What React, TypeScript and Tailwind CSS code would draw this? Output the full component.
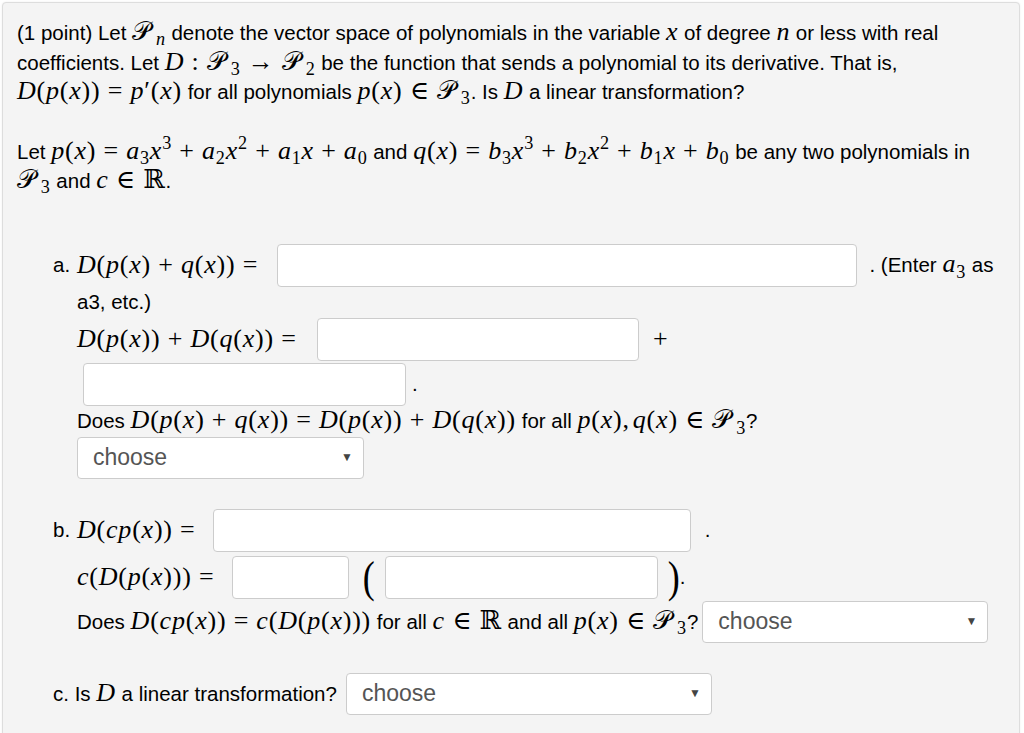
import React from 'react';

const mathFont = { fontFamily: '"Liberation Serif", "DejaVu Serif", serif' };

// italic math variable
const V = ({ children }: { children: React.ReactNode }) => (
  <span className="italic">{children}</span>
);

const Sub = ({ children }: { children: React.ReactNode }) => (
  <sub className="not-italic text-[0.7em] relative top-[0.3em] align-baseline">{children}</sub>
);

const Sup = ({ children }: { children: React.ReactNode }) => (
  <sup className="not-italic text-[0.7em] relative -top-[0.5em] align-baseline">{children}</sup>
);

const M = ({ children }: { children: React.ReactNode }) => (
  <span className="text-[26px] leading-none tracking-[0.03em] whitespace-nowrap" style={mathFont}>
    {children}
  </span>
);

const P = ({ n }: { n: React.ReactNode }) => (
  <>
    <span>𝒫</span>
    <Sub>
      <span className="ml-[4px]">{n}</span>
    </Sub>
  </>
);

const Op = ({ children }: { children: React.ReactNode }) => (
  <span className="mx-[0.28em]">{children}</span>
);

const Input = ({ w, className = '' }: { w: string; className?: string }) => (
  <div className={`h-[43px] bg-white border border-[#cccccc] rounded-[4px] shrink-0 ${w} ${className}`} />
);

const Select = ({ w }: { w: string }) => (
  <div className={`h-[42px] ${w} bg-white border border-[#cccccc] rounded-[4px] flex items-center justify-between pl-[15px] pr-[10px] shrink-0`}>
    <span className="text-[23px] text-[#555555]">choose</span>
    <span className="text-[12px] text-[#444444]">▼</span>
  </div>
);

const px = (
  <>
    <V>p</V>(<V>x</V>)
  </>
);
const qx = (
  <>
    <V>q</V>(<V>x</V>)
  </>
);

export default function App() {
  return (
    <div className="w-[1024px] h-[733px] overflow-hidden bg-white pt-[2px] pl-[2px] pr-[4px]">
      <div
        className="h-[760px] bg-[#f4f4f4] border border-[#dddddd] rounded-[4px] shadow-[0_0_2px_rgba(0,0,0,0.08)] pl-[14px] pr-[20px] pt-[15px] text-[20.5px] text-black leading-[29.5px]"
        style={{ fontFamily: '"Liberation Sans", Arial, sans-serif' }}
      >
        <p>
          (1 point) Let <M><P n={<V>n</V>} /></M> denote the vector space of polynomials in the variable{' '}
          <M><V>x</V></M> of degree <M><V>n</V></M> or less with real coefficients. Let{' '}
          <M>
            <V>D</V>
            <Op>:</Op>
            <P n="3" />
            <Op>→</Op>
            <P n="2" />
          </M>{' '}
          be the function that sends a polynomial to its derivative. That is,{' '}
          <M>
            <V>D</V>({px})<Op>=</Op>
            <V>p</V>′(<V>x</V>)
          </M>{' '}
          for all polynomials{' '}
          <M>
            {px}
            <Op>∈</Op>
            <P n="3" />
          </M>
          . Is <M><V>D</V></M> a linear transformation?
        </p>

        <p className="mt-[30px]">
          Let{' '}
          <M>
            {px}
            <Op>=</Op>
            <V>a</V><Sub>3</Sub><V>x</V><Sup>3</Sup>
            <Op>+</Op>
            <V>a</V><Sub>2</Sub><V>x</V><Sup>2</Sup>
            <Op>+</Op>
            <V>a</V><Sub>1</Sub><V>x</V>
            <Op>+</Op>
            <V>a</V><Sub>0</Sub>
          </M>{' '}
          and{' '}
          <M>
            {qx}
            <Op>=</Op>
            <V>b</V><Sub>3</Sub><V>x</V><Sup>3</Sup>
            <Op>+</Op>
            <V>b</V><Sub>2</Sub><V>x</V><Sup>2</Sup>
            <Op>+</Op>
            <V>b</V><Sub>1</Sub><V>x</V>
            <Op>+</Op>
            <V>b</V><Sub>0</Sub>
          </M>{' '}
          be any two polynomials in <M><P n="3" /></M> and{' '}
          <M>
            <V>c</V>
            <Op>∈</Op>ℝ
          </M>
          .
        </p>

        {/* part a */}
        <div className="mt-[48px] pl-[36px]">
          <div className="flex items-center">
            <span className="w-[24px]">a.</span>
            <M>
              <V>D</V>({px}
              <Op>+</Op>
              {qx})<Op>=</Op>
            </M>
            <Input w="w-[580px]" className="ml-[12px]" />
            <span className="ml-[12px] whitespace-nowrap">
              . (Enter <M><V>a</V><Sub>3</Sub></M> as
            </span>
          </div>
          <div className="pl-[24px]">
            <div className="h-[31px] flex items-center">a3, etc.)</div>
            <div className="flex items-center">
              <M>
                <V>D</V>({px})<Op>+</Op>
                <V>D</V>({qx})<Op>=</Op>
              </M>
              <Input w="w-[322px]" className="ml-[13px]" />
              <M>
                <span className="ml-[14px]">+</span>
              </M>
            </div>
            <div className="flex items-center mt-[2px] pl-[6px]">
              <Input w="w-[323px]" />
              <span className="ml-[6px]">.</span>
            </div>
            <div className="h-[31px] flex items-center">
              <span>
                Does{' '}
                <M>
                  <V>D</V>({px}<Op>+</Op>{qx})<Op>=</Op>
                  <V>D</V>({px})<Op>+</Op>
                  <V>D</V>({qx})
                </M>{' '}
                for all{' '}
                <M>
                  {px},<span className="ml-[3px]" />{qx}
                  <Op>∈</Op>
                  <P n="3" />
                </M>
                ?
              </span>
            </div>
            <Select w="w-[287px]" />
          </div>
        </div>

        {/* part b */}
        <div className="mt-[30px] pl-[36px]">
          <div className="flex items-center">
            <span className="w-[24px]">b.</span>
            <M>
              <V>D</V>(<V>c</V>{px})<Op>=</Op>
            </M>
            <Input w="w-[478px]" className="ml-[10px]" />
            <span className="ml-[14px]">.</span>
          </div>
          <div className="pl-[24px]">
            <div className="flex items-center mt-[4px]">
              <M>
                <V>c</V>(<V>D</V>({px}))<Op>=</Op>
              </M>
              <Input w="w-[117px]" className="ml-[10px]" />
              <span
                className="ml-[14px] text-[36px] leading-none scale-y-125 font-light"
                style={mathFont}
              >
                (
              </span>
              <Input w="w-[273px]" className="ml-[10px]" />
              <span
                className="ml-[10px] text-[36px] leading-none scale-y-125 font-light"
                style={mathFont}
              >
                )
              </span>
              <span>.</span>
            </div>
            <div className="flex items-center mt-[2px]">
              <span className="whitespace-nowrap">
                Does{' '}
                <M>
                  <V>D</V>(<V>c</V>{px})<Op>=</Op>
                  <V>c</V>(<V>D</V>({px}))
                </M>{' '}
                for all{' '}
                <M>
                  <V>c</V>
                  <Op>∈</Op>ℝ
                </M>{' '}
                and all{' '}
                <M>
                  {px}
                  <Op>∈</Op>
                  <P n="3" />
                </M>
                ?
              </span>
              <div className="ml-[4px]">
                <Select w="w-[286px]" />
              </div>
            </div>
          </div>
        </div>

        {/* part c */}
        <div className="mt-[30px] pl-[36px] flex items-center">
          <span>
            c. Is <M><V>D</V></M> a linear transformation?
          </span>
          <div className="ml-[9px]">
            <Select w="w-[366px]" />
          </div>
        </div>
      </div>
    </div>
  );
}
